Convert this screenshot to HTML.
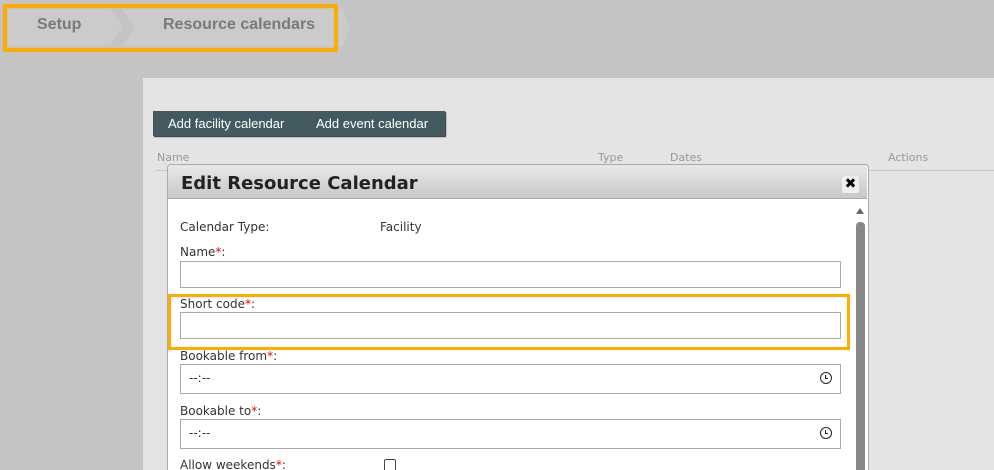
<!DOCTYPE html>
<html><head><style>
html,body{margin:0;width:994px;height:470px;overflow:hidden}
body{background:#c4c4c4;font-family:"DejaVu Sans",sans-serif;position:relative}
.a{position:absolute}
.lbl{font-size:12px;color:#333}
.req{color:#e00}
.inp{position:absolute;left:180px;width:659px;background:#fff;border:1px solid #aaa}
.t{font-size:12px;color:#333;position:absolute;left:8px}
.clk{position:absolute;right:8px;top:7px;width:10px;height:10px;border:1.3px solid #222;border-radius:50%}
.clk:after{content:"";position:absolute;left:4px;top:2px;width:2px;height:3px;border-left:1.2px solid #222;border-bottom:1.2px solid #222}
</style></head><body>
<div class="a" style="left:8px;top:9px;width:330px;height:37px;background:#cbcbcb"></div>
<svg class="a" style="left:0;top:0" width="360" height="50"><polygon points="110,9 122,9 135,27 122,46 110,46 123,27" fill="#c4c4c4"/><polygon points="336,9 343,9 350,27 343,46 336,46" fill="#cbcbcb"/></svg>
<div class="a" style="left:37px;top:16px;font-size:16px;font-weight:bold;color:#7a7a7a;font-family:'Liberation Sans',sans-serif">Setup</div>
<div class="a" style="left:163px;top:16px;font-size:16px;font-weight:bold;color:#7a7a7a;font-family:'Liberation Sans',sans-serif">Resource calendars</div>
<div class="a" style="left:3px;top:4px;width:327px;height:40px;border:4px solid #ffab00"></div>
<div class="a" style="left:143px;top:78px;width:851px;height:392px;background:#e4e4e4"></div>
<div class="a" style="left:153px;top:111px;width:292px;height:25px;background:#435a61;box-shadow:1px 1px 1px #222"></div>
<div class="a" style="left:168px;top:116px;font-size:13px;color:#fff;font-family:'Liberation Sans',sans-serif">Add facility calendar</div>
<div class="a" style="left:316px;top:116px;font-size:13px;color:#fff;font-family:'Liberation Sans',sans-serif">Add event calendar</div>
<div class="a" style="left:157px;top:151px;font-size:11px;color:#999">Name</div>
<div class="a" style="left:598px;top:151px;font-size:11px;color:#999">Type</div>
<div class="a" style="left:670px;top:151px;font-size:11px;color:#999">Dates</div>
<div class="a" style="left:888px;top:151px;font-size:11px;color:#999">Actions</div>
<div class="a" style="left:155px;top:170px;width:839px;height:1px;background:#c8c8c8"></div>
<div class="a" style="left:167px;top:164px;width:700px;height:306px;background:#fff;border:1px solid #aaa;border-bottom:0;border-radius:4px 4px 0 0"></div>
<div class="a" style="left:168px;top:165px;width:699px;height:33px;background:linear-gradient(#e8e8e8,#c8c8c8);border-bottom:1px solid #aaa;border-radius:3px 3px 0 0"></div>
<div class="a" style="left:181px;top:173px;font-size:18px;font-weight:bold;color:#222">Edit Resource Calendar</div>
<div class="a" style="left:842px;top:176px;width:17px;height:17px;background:#eee;border-radius:2px;font-size:14px;font-weight:bold;text-align:center;line-height:17px">✖</div>
<div class="a" style="left:856px;top:208px;width:0;height:0;border:4px solid transparent;border-bottom:6px solid #666;border-top:0"></div>
<div class="a" style="left:856px;top:222px;width:9px;height:248px;background:#888;border-radius:4px 4px 0 0"></div>
<div class="a lbl" style="left:180px;top:220px">Calendar Type:</div>
<div class="a lbl" style="left:380px;top:220px">Facility</div>
<div class="a lbl" style="left:180px;top:245px">Name<span class="req">*</span>:</div>
<div class="inp" style="top:261px;height:25px"></div>
<div class="a lbl" style="left:180px;top:297px">Short code<span class="req">*</span>:</div>
<div class="inp" style="top:312px;height:25px"></div>
<div class="a" style="left:168px;top:294px;width:676px;height:50px;border:3px solid #ffab00"></div>
<div class="a lbl" style="left:180px;top:349px">Bookable from<span class="req">*</span>:</div>
<div class="inp" style="top:364px;height:28px"><span class="t" style="top:6px">--:--</span><div class="clk"></div></div>
<div class="a lbl" style="left:180px;top:404px">Bookable to<span class="req">*</span>:</div>
<div class="inp" style="top:419px;height:28px"><span class="t" style="top:6px">--:--</span><div class="clk"></div></div>
<div class="a lbl" style="left:180px;top:458px">Allow weekends<span class="req">*</span>:</div>
<div class="a" style="left:384px;top:459px;width:10px;height:12px;border:1px solid #444;border-radius:2px;background:#fff"></div>
</body></html>
